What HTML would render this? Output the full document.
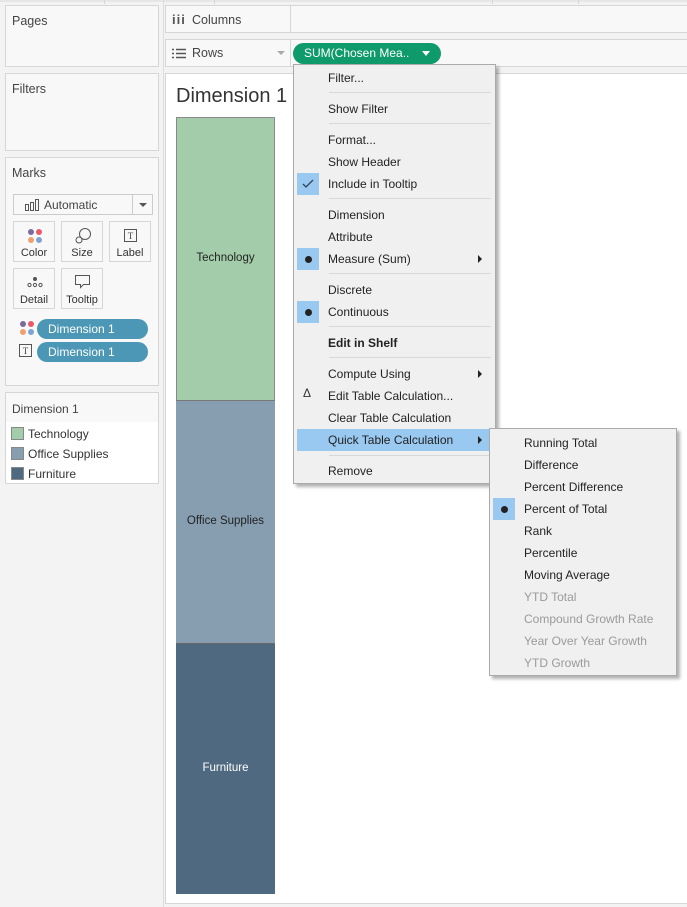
<!DOCTYPE html>
<html><head><meta charset="utf-8"><style>
*{box-sizing:border-box;margin:0;padding:0}
body{width:687px;height:907px;background:#f3f3f3;font-family:"Liberation Sans",sans-serif;font-size:12px;color:#333;position:relative;overflow:hidden}
.a{position:absolute}
.panel{position:absolute;background:#f8f8f8;border:1px solid #d6d6d6}
.ptitle{position:absolute;left:6px;top:8px;font-size:12.5px;color:#444}
.card{position:absolute;width:42px;height:41px;border:1px solid #d6d6d6;background:#f8f8f8;text-align:center;font-size:11px;color:#333}
.card span{position:absolute;bottom:2px;left:0;right:0}
.pill{position:absolute;left:37px;width:111px;height:20px;border-radius:10px;background:#4b97b5;color:#fff;font-size:12px;padding-left:11px;line-height:20px}
.mi{position:absolute;left:34px;font-size:12px;color:#222;line-height:22px;height:22px}
.sep{position:absolute;left:35px;right:4px;height:1px;background:#d8d8d8}
.chk{position:absolute;left:3px;width:22px;height:22px;background:#99c9f0}
.dot{position:absolute;width:7px;height:7px;border-radius:50%;background:#222;left:8px;top:8px}
.arr{position:absolute;right:13px;width:0;height:0;border-top:4px solid transparent;border-bottom:4px solid transparent;border-left:4px solid #222}
.si{position:absolute;left:34px;line-height:22px;font-size:12px;color:#222}
.si.g{color:#9a9a9a}
</style></head><body>
<div class="a" style="left:0;top:0;width:687px;height:2px;background:#e6e6e6"></div>
<div class="a" style="left:104px;top:0;width:1px;height:4px;background:#d6d6d6"></div>
<div class="a" style="left:214px;top:0;width:1px;height:4px;background:#d6d6d6"></div>
<div class="a" style="left:492px;top:0;width:1px;height:4px;background:#d6d6d6"></div>
<div class="a" style="left:578px;top:0;width:1px;height:4px;background:#d6d6d6"></div>
<div class="a" style="left:163px;top:0;width:1px;height:907px;background:#dcdcdc"></div>

<div class="panel" style="left:5px;top:5px;width:154px;height:62px"><div class="ptitle">Pages</div></div>
<div class="panel" style="left:5px;top:73px;width:154px;height:78px"><div class="ptitle">Filters</div></div>
<div class="panel" style="left:5px;top:157px;width:154px;height:229px"><div class="ptitle">Marks</div>
 <div class="a" style="left:7px;top:36px;width:140px;height:21px;border:1px solid #ccc;background:#f8f8f8">
  <svg class="a" style="left:10px;top:4px" width="16" height="12"><g fill="none" stroke="#555"><rect x="1.5" y="5.5" width="3" height="6"/><rect x="6.5" y="3.5" width="3" height="8"/><rect x="11.5" y="0.5" width="3" height="11"/></g></svg>
  <span class="a" style="left:30px;top:3px;color:#444">Automatic</span>
  <div class="a" style="left:118px;top:0;width:1px;height:19px;background:#ccc"></div>
  <div class="a" style="left:125px;top:8px;border-left:4px solid transparent;border-right:4px solid transparent;border-top:4px solid #555"></div>
 </div>
 <div class="card" style="left:7px;top:63px"><svg class="a" style="left:13px;top:6px" width="16" height="16"><circle cx="4" cy="4" r="3" fill="#7c6a9c"/><circle cx="12" cy="4" r="3" fill="#e85a6a"/><circle cx="4" cy="12" r="3" fill="#f0a070"/><circle cx="12" cy="12" r="3" fill="#7fa3d0"/></svg><span>Color</span></div>
 <div class="card" style="left:55px;top:63px"><svg class="a" style="left:12px;top:5px" width="18" height="18"><circle cx="11" cy="7" r="5.5" fill="none" stroke="#555"/><circle cx="5" cy="13" r="3" fill="#f8f8f8" stroke="#555"/></svg><span>Size</span></div>
 <div class="card" style="left:103px;top:63px"><svg class="a" style="left:13px;top:6px" width="16" height="16"><rect x="1.5" y="1.5" width="12" height="12" fill="none" stroke="#555"/><text x="7.5" y="11" font-size="9" text-anchor="middle" font-family="Liberation Serif" fill="#444">T</text></svg><span>Label</span></div>
 <div class="card" style="left:7px;top:110px"><svg class="a" style="left:12px;top:7px" width="18" height="12"><circle cx="9" cy="3" r="2" fill="#555"/><g fill="none" stroke="#555"><circle cx="3.5" cy="9" r="1.6"/><circle cx="9" cy="9" r="1.6"/><circle cx="14.5" cy="9" r="1.6"/></g></svg><span>Detail</span></div>
 <div class="card" style="left:55px;top:110px"><svg class="a" style="left:12px;top:5px" width="18" height="16"><path d="M1.5 1.5h14v9h-6l-3 3v-3h-5z" fill="none" stroke="#555"/></svg><span>Tooltip</span></div>
 <svg class="a" style="left:13px;top:162px" width="16" height="16"><circle cx="4" cy="4" r="3" fill="#7c6a9c"/><circle cx="12" cy="4" r="3" fill="#e85a6a"/><circle cx="4" cy="12" r="3" fill="#f0a070"/><circle cx="12" cy="12" r="3" fill="#7fa3d0"/></svg>
 <div class="pill" style="left:31px;top:161px">Dimension 1</div>
 <svg class="a" style="left:13px;top:186px" width="14" height="14"><rect x="0.5" y="0.5" width="12" height="12" fill="none" stroke="#555"/><text x="6.5" y="10" font-size="9" text-anchor="middle" font-family="Liberation Serif" fill="#444">T</text></svg>
 <div class="pill" style="left:31px;top:184px">Dimension 1</div>
</div>
<div class="panel" style="left:5px;top:392px;width:154px;height:92px;background:#fff">
 <div class="a" style="left:0;top:0;width:152px;height:29px;background:#f8f8f8"></div>
 <div class="ptitle" style="top:9px;font-size:12px">Dimension 1</div>
 <div class="a" style="left:5px;top:34px;width:13px;height:13px;background:#a3cdaa;border:1px solid #888"></div><span class="a" style="left:22px;top:34px">Technology</span>
 <div class="a" style="left:5px;top:54px;width:13px;height:13px;background:#879eb1;border:1px solid #888"></div><span class="a" style="left:22px;top:54px">Office Supplies</span>
 <div class="a" style="left:5px;top:74px;width:13px;height:13px;background:#4f6a80;border:1px solid #888"></div><span class="a" style="left:22px;top:74px">Furniture</span>
</div>

<div class="panel" style="left:165px;top:5px;width:530px;height:28px">
 <div class="a" style="left:6px;top:6px;font-weight:bold;color:#555;letter-spacing:1px;font-size:13px">iii</div>
 <span class="a" style="left:26px;top:7px;color:#444;font-size:12.5px">Columns</span>
 <div class="a" style="left:124px;top:0;width:1px;height:27px;background:#d6d6d6"></div>
</div>
<div class="panel" style="left:165px;top:39px;width:530px;height:28px">
 <svg class="a" style="left:6px;top:8px" width="14" height="11"><g stroke="#555" stroke-width="1.5"><path d="M0 1.5h2M4 1.5h10M0 5.5h2M4 5.5h10M0 9.5h2M4 9.5h10"/></g></svg>
 <span class="a" style="left:26px;top:6px;color:#444;font-size:12.5px">Rows</span>
 <div class="a" style="left:111px;top:11px;border-left:4px solid transparent;border-right:4px solid transparent;border-top:4px solid #aaa"></div>
 <div class="a" style="left:124px;top:0;width:1px;height:27px;background:#d6d6d6"></div>
</div>
<div class="a" style="left:293px;top:43px;width:148px;height:21px;border-radius:11px;background:#0e9a6a;color:#fff;padding-left:11px;line-height:20px;font-size:12px">SUM(Chosen Mea..<span class="a" style="left:129px;top:8px;border-left:4px solid transparent;border-right:4px solid transparent;border-top:5px solid #fff"></span></div>

<div class="a" style="left:165px;top:73px;width:530px;height:831px;background:#fff;border:1px solid #d6d6d6"></div>
<div class="a" style="left:176px;top:85px;font-size:20px;color:#333">Dimension 1 (</div>
<div class="a" style="left:176px;top:117px;width:99px;height:284px;background:#a3cdaa;border:1px solid #8a8a8a;border-bottom:none"></div>
<div class="a" style="left:176px;top:400px;width:99px;height:244px;background:#879eb1;border-top:1px solid #777"></div>
<div class="a" style="left:176px;top:643px;width:99px;height:251px;background:#4f6a80;border-top:1px solid #666"></div>
<div class="a" style="left:176px;top:252px;width:99px;text-align:center;font-size:11.5px;color:#222">Technology</div>
<div class="a" style="left:176px;top:515px;width:99px;text-align:center;font-size:11.5px;color:#222">Office Supplies</div>
<div class="a" style="left:176px;top:762px;width:99px;text-align:center;font-size:11.5px;color:#fff">Furniture</div>

<div class="a" style="left:293px;top:64px;width:203px;height:420px;background:#f0f0f0;border:1px solid #aaa;box-shadow:3px 3px 3px rgba(0,0,0,.3)">
 <div class="mi" style="top:2px">Filter...</div>
 <div class="sep" style="top:27px"></div>
 <div class="mi" style="top:33px">Show Filter</div>
 <div class="sep" style="top:58px"></div>
 <div class="mi" style="top:64px">Format...</div>
 <div class="mi" style="top:86px">Show Header</div>
 <div class="chk" style="top:108px"><svg class="a" style="left:5px;top:6px" width="12" height="10"><path d="M1 5l3 3 7-7" fill="none" stroke="#345" stroke-width="1.3"/></svg></div>
 <div class="mi" style="top:108px">Include in Tooltip</div>
 <div class="sep" style="top:133px"></div>
 <div class="mi" style="top:139px">Dimension</div>
 <div class="mi" style="top:161px">Attribute</div>
 <div class="chk" style="top:183px"><div class="dot"></div></div>
 <div class="mi" style="top:183px">Measure (Sum)</div><div class="arr" style="top:190px"></div>
 <div class="sep" style="top:208px"></div>
 <div class="mi" style="top:214px">Discrete</div>
 <div class="chk" style="top:236px"><div class="dot"></div></div>
 <div class="mi" style="top:236px">Continuous</div>
 <div class="sep" style="top:261px"></div>
 <div class="mi" style="top:267px;font-weight:bold">Edit in Shelf</div>
 <div class="sep" style="top:292px"></div>
 <div class="mi" style="top:298px">Compute Using</div><div class="arr" style="top:305px"></div>
 <div class="a" style="left:9px;top:321px;font-size:12px">Δ</div>
 <div class="mi" style="top:320px">Edit Table Calculation...</div>
 <div class="mi" style="top:342px">Clear Table Calculation</div>
 <div class="a" style="left:3px;top:364px;width:195px;height:22px;background:#99c9f0"></div>
 <div class="mi" style="top:364px">Quick Table Calculation</div><div class="arr" style="top:371px"></div>
 <div class="sep" style="top:390px"></div>
 <div class="mi" style="top:395px">Remove</div>
</div>

<div class="a" style="left:489px;top:428px;width:188px;height:248px;background:#f0f0f0;border:1px solid #aaa;box-shadow:3px 3px 3px rgba(0,0,0,.3)">
 <div class="si" style="top:3px">Running Total</div>
 <div class="si" style="top:25px">Difference</div>
 <div class="si" style="top:47px">Percent Difference</div>
 <div class="chk" style="top:69px"><div class="dot"></div></div>
 <div class="si" style="top:69px">Percent of Total</div>
 <div class="si" style="top:91px">Rank</div>
 <div class="si" style="top:113px">Percentile</div>
 <div class="si" style="top:135px">Moving Average</div>
 <div class="si g" style="top:157px">YTD Total</div>
 <div class="si g" style="top:179px">Compound Growth Rate</div>
 <div class="si g" style="top:201px">Year Over Year Growth</div>
 <div class="si g" style="top:223px">YTD Growth</div>
</div>
</body></html>
